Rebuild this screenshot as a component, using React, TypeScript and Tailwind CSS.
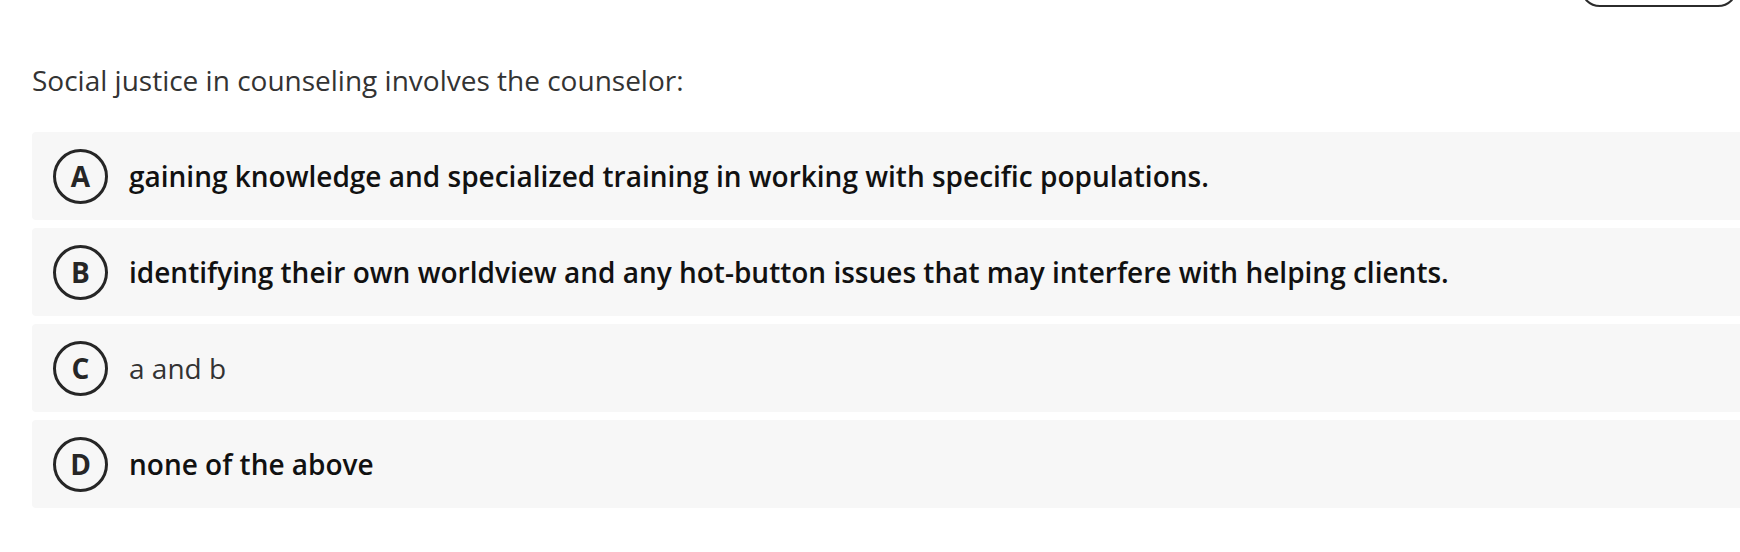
const options = [
  { key: 'A', text: 'gaining knowledge and specialized training in working with specific populations.', strong: true },
  { key: 'B', text: 'identifying their own worldview and any hot-button issues that may interfere with helping clients.', strong: true },
  { key: 'C', text: 'a and b', strong: false },
  { key: 'D', text: 'none of the above', strong: true },
]

function Choice({ letter, text, strong }: { letter: string; text: string; strong: boolean }) {
  return (
    <li className="flex h-[88px] items-center gap-[21px] rounded-[4px] bg-[#f7f7f7] pl-[21px]">
      <span className="flex h-[55px] w-[55px] shrink-0 items-center justify-center rounded-full border-[3.5px] border-[#262626] text-[28px] font-bold leading-none text-[#262626]">
        {letter}
      </span>
      <span
        className={
          strong
            ? 'text-[28px] font-semibold leading-[42px] text-[#111]'
            : 'text-[28px] font-medium leading-[42px] text-[#333]'
        }
      >
        {text}
      </span>
    </li>
  )
}

export default function App() {
  return (
    <div className="h-[552px] w-[1740px] overflow-hidden bg-white font-['Open_Sans',sans-serif]">
      <div className="flex justify-end pr-[2px]">
        <button type="button" className="-mt-[33px] h-10 w-[158px] rounded-[20px] border-2 border-[#2b2b2b] bg-white" />
      </div>
      <div className="pl-8 pt-[52px]">
        <p className="text-[28px] leading-[42px] text-[#333]">Social justice in counseling involves the counselor:</p>
        <ul className="mt-[31px] flex w-[1760px] flex-col gap-2">
          {options.map((o) => (
            <Choice key={o.key} letter={o.key} text={o.text} strong={o.strong} />
          ))}
        </ul>
      </div>
    </div>
  )
}
